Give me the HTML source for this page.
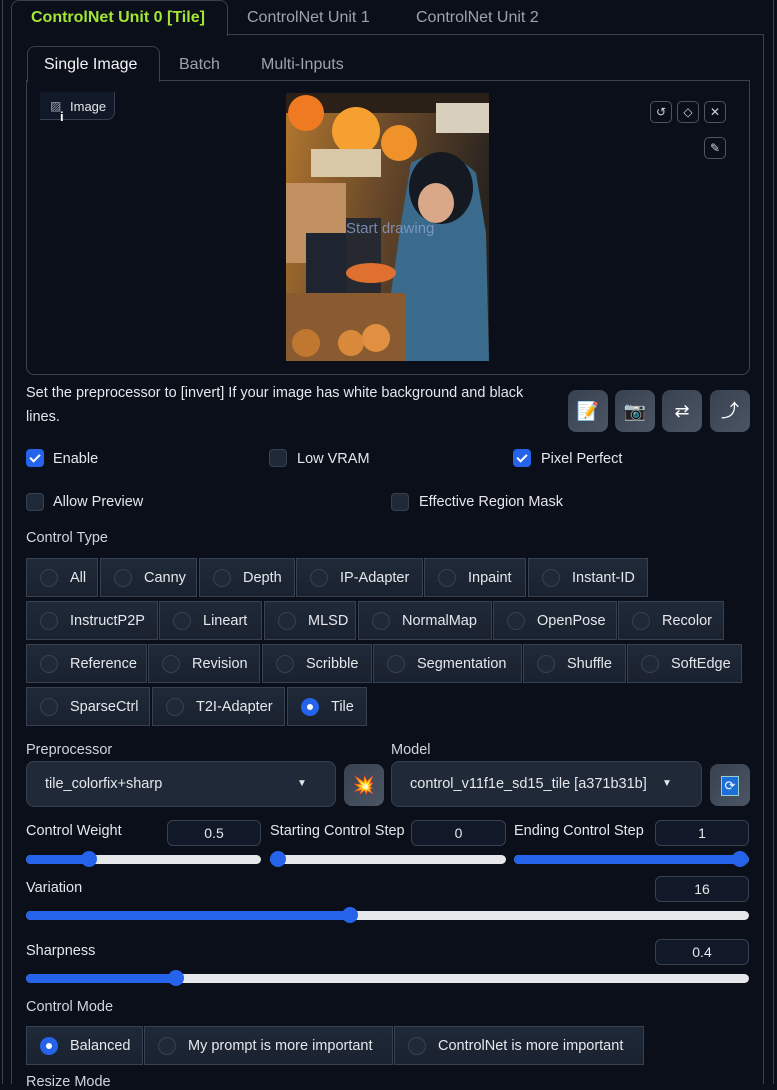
<!DOCTYPE html>
<html><head><meta charset="utf-8"><style>
*{box-sizing:border-box;margin:0;padding:0}
body{width:777px;height:1084px;background:#0b0f19;overflow:hidden;position:relative;font-family:"Liberation Sans",sans-serif;color:#e5e7eb;font-size:14px}
.a{position:absolute}
.ln{position:absolute;background:#374151}
.t{position:absolute;white-space:nowrap;margin-top:1px}
.rb{position:absolute;height:39px;background:linear-gradient(#1f2937,#1a2230);border:1px solid #374151;display:flex;align-items:center;padding-left:13px;font-size:14.5px;color:#e5e7eb}
.rb i{display:inline-block;width:18px;height:18px;border-radius:50%;border:1px solid #374151;background:#1f2937;margin-right:12px;flex:none}
.rb i.on{background:#2563eb;border-color:#2563eb;position:relative}
.rb i.on:after{content:"";position:absolute;left:5px;top:5px;width:6px;height:6px;border-radius:50%;background:#fff}
.cb{position:absolute;width:18px;height:18px;border-radius:4px;background:#1f2937;border:1px solid #374151}
.cb.on{background:#2563eb;border-color:#2563eb}
.cb.on:after{content:"";position:absolute;left:5px;top:2px;width:4px;height:8px;border:solid #fff;border-width:0 2px 2px 0;transform:rotate(45deg)}
.num{position:absolute;height:26px;background:#111827;border:1px solid #374151;border-radius:6px;text-align:center;line-height:24px;font-size:14px}
.tr{position:absolute;height:9px;background:#e5e7eb;border-radius:5px;overflow:hidden}
.tr b{position:absolute;left:0;top:0;bottom:0;background:#2563eb}
.th{position:absolute;width:16px;height:16px;border-radius:50%;background:#2563eb}
.ib{position:absolute;width:22px;height:22px;border:1px solid #4b5563;border-radius:5px;color:#d1d5db;font-size:12px;text-align:center;line-height:20px}
.gb{position:absolute;width:40px;height:42px;border-radius:8px;background:linear-gradient(135deg,#374151,#4b5563);text-align:center;line-height:42px;font-size:18px}
.dd{position:absolute;height:46px;background:#1f2937;border:1px solid #374151;border-radius:8px;line-height:44px;padding-left:18px;font-size:14.5px}
</style></head><body>
<div class="ln" style="left:2px;top:0;width:1px;height:1084px"></div>
<div class="ln" style="left:773px;top:0;width:1px;height:1084px"></div>
<div class="ln" style="left:11px;top:10px;width:1px;height:1074px"></div>
<div class="ln" style="left:763px;top:34px;width:1px;height:1050px"></div>
<div class="a" style="left:11px;top:0;width:217px;height:36px;border:1px solid #374151;border-bottom:none;border-radius:8px 8px 0 0;background:#0b0f19"></div>
<div class="ln" style="left:227px;top:34px;width:537px;height:1px"></div>
<div class="t" style="left:31px;top:8px;font-size:16px;font-weight:bold;color:#a3e635">ControlNet Unit 0 [Tile]</div>
<div class="t" style="left:247px;top:8px;font-size:16px;color:#9ca3af">ControlNet Unit 1</div>
<div class="t" style="left:416px;top:8px;font-size:16px;color:#9ca3af">ControlNet Unit 2</div>
<div class="a" style="left:27px;top:46px;width:133px;height:36px;border:1px solid #374151;border-bottom:none;border-radius:8px 8px 0 0;background:#0b0f19;z-index:2"></div>
<div class="t" style="left:44px;top:55px;font-size:16px;color:#f3f4f6;z-index:3">Single Image</div>
<div class="t" style="left:179px;top:55px;font-size:16px;color:#9ca3af">Batch</div>
<div class="t" style="left:261px;top:55px;font-size:16px;color:#9ca3af">Multi-Inputs</div>
<div class="a" style="left:26px;top:80px;width:724px;height:295px;border:1px solid #374151;border-radius:0 0 8px 8px"></div>
<div class="a" style="left:40px;top:92px;width:75px;height:28px;border:1px solid #374151;border-top:none;border-left:none;border-radius:0 0 8px 0;background:#111827"></div>
<div class="t" style="left:50px;top:98px;font-size:12px;color:#9ca3af">▨</div>
<div class="t" style="left:70px;top:98px;font-size:13px;color:#e5e7eb">Image</div>
<div class="t" style="left:60px;top:108px;font-size:13px;font-weight:bold;color:#fff">i</div>
<svg class="a" style="left:286px;top:93px" width="203" height="268" viewBox="0 0 203 268">
<defs><linearGradient id="bg" x1="0" y1="0" x2="1" y2="0.3"><stop offset="0" stop-color="#b4782e"/><stop offset="0.5" stop-color="#6b4a2a"/><stop offset="1" stop-color="#2a2420"/></linearGradient></defs>
<rect width="203" height="268" fill="url(#bg)"/>
<rect x="0" y="0" width="203" height="20" fill="#2b2018"/>
<circle cx="20" cy="20" r="18" fill="#f07a22"/><circle cx="70" cy="38" r="24" fill="#f5a030"/><circle cx="113" cy="50" r="18" fill="#f0922a"/>
<rect x="25" y="56" width="70" height="28" fill="#d8c8a8"/>
<rect x="150" y="10" width="53" height="30" fill="#d8cfbc"/>
<rect x="0" y="90" width="60" height="80" fill="#c09060"/>
<rect x="20" y="140" width="40" height="80" fill="#1e2430"/><rect x="60" y="125" width="35" height="90" fill="#262a30"/>
<path d="M125 70 Q160 50 190 80 L200 140 L203 268 L110 268 L105 200 L115 130 Z" fill="#3a6a8c"/>
<ellipse cx="155" cy="95" rx="32" ry="36" fill="#151a22"/>
<ellipse cx="150" cy="110" rx="18" ry="20" fill="#d9a888"/>
<rect x="0" y="200" width="120" height="68" fill="#8a5a30"/>
<circle cx="90" cy="245" r="14" fill="#e09040"/><circle cx="65" cy="250" r="13" fill="#d88a3a"/><circle cx="20" cy="250" r="14" fill="#c07830"/>
<ellipse cx="85" cy="180" rx="25" ry="10" fill="#e07030"/>
</svg>
<div class="t" style="left:346px;top:219px;font-size:15px;color:#8aa0c8;opacity:.8">Start drawing</div>
<div class="ib" style="left:650px;top:101px">↺</div>
<div class="ib" style="left:677px;top:101px">◇</div>
<div class="ib" style="left:704px;top:101px">✕</div>
<div class="ib" style="left:704px;top:137px">✎</div>
<div class="t" style="left:26px;top:380px;font-size:14.5px;line-height:24px;color:#e5e7eb">Set the preprocessor to [invert] If your image has white background and black<br>lines.</div>
<div class="gb" style="left:568px;top:390px">📝</div>
<div class="gb" style="left:615px;top:390px">📷</div>
<div class="gb" style="left:662px;top:390px;color:#fff">⇄</div>
<div class="gb" style="left:710px;top:390px;color:#fff">⤴</div>
<div class="cb on" style="left:26px;top:449px"></div><div class="t" style="left:53px;top:450px;font-size:14.5px">Enable</div>
<div class="cb" style="left:269px;top:449px"></div><div class="t" style="left:297px;top:450px;font-size:14.5px">Low VRAM</div>
<div class="cb on" style="left:513px;top:449px"></div><div class="t" style="left:541px;top:450px;font-size:14.5px">Pixel Perfect</div>
<div class="cb" style="left:26px;top:493px"></div><div class="t" style="left:53px;top:493px;font-size:14.5px">Allow Preview</div>
<div class="cb" style="left:391px;top:493px"></div><div class="t" style="left:419px;top:493px;font-size:14.5px">Effective Region Mask</div>
<div class="t" style="left:26px;top:529px;font-size:14.5px;color:#d1d5db">Control Type</div>
<div class="rb" style="left:26px;top:558px;width:72px"><i></i>All</div>
<div class="rb" style="left:100px;top:558px;width:97px"><i></i>Canny</div>
<div class="rb" style="left:199px;top:558px;width:96px"><i></i>Depth</div>
<div class="rb" style="left:296px;top:558px;width:127px"><i></i>IP-Adapter</div>
<div class="rb" style="left:424px;top:558px;width:102px"><i></i>Inpaint</div>
<div class="rb" style="left:528px;top:558px;width:120px"><i></i>Instant-ID</div>
<div class="rb" style="left:26px;top:601px;width:132px"><i></i>InstructP2P</div>
<div class="rb" style="left:159px;top:601px;width:103px"><i></i>Lineart</div>
<div class="rb" style="left:264px;top:601px;width:92px"><i></i>MLSD</div>
<div class="rb" style="left:358px;top:601px;width:134px"><i></i>NormalMap</div>
<div class="rb" style="left:493px;top:601px;width:124px"><i></i>OpenPose</div>
<div class="rb" style="left:618px;top:601px;width:106px"><i></i>Recolor</div>
<div class="rb" style="left:26px;top:644px;width:121px"><i></i>Reference</div>
<div class="rb" style="left:148px;top:644px;width:112px"><i></i>Revision</div>
<div class="rb" style="left:262px;top:644px;width:110px"><i></i>Scribble</div>
<div class="rb" style="left:373px;top:644px;width:149px"><i></i>Segmentation</div>
<div class="rb" style="left:523px;top:644px;width:103px"><i></i>Shuffle</div>
<div class="rb" style="left:627px;top:644px;width:115px"><i></i>SoftEdge</div>
<div class="rb" style="left:26px;top:687px;width:124px"><i></i>SparseCtrl</div>
<div class="rb" style="left:152px;top:687px;width:133px"><i></i>T2I-Adapter</div>
<div class="rb" style="left:287px;top:687px;width:80px"><i class="on"></i>Tile</div>
<div class="t" style="left:26px;top:741px;font-size:14.5px;color:#d1d5db">Preprocessor</div>
<div class="t" style="left:391px;top:741px;font-size:14.5px;color:#d1d5db">Model</div>
<div class="dd" style="left:26px;top:761px;width:310px">tile_colorfix+sharp<span style="position:absolute;left:270px;font-size:10px">▼</span></div>
<div class="gb" style="left:344px;top:764px;width:40px">💥</div>
<div class="dd" style="left:391px;top:761px;width:311px">control_v11f1e_sd15_tile [a371b31b]<span style="position:absolute;left:270px;font-size:10px">▼</span></div>
<div class="gb" style="left:710px;top:764px;width:40px"><span style="display:inline-block;width:18px;height:20px;background:#1d6fd8;border:1px solid #9cc;color:#fff;font-size:13px;line-height:18px;vertical-align:middle">⟳</span></div>
<div class="t" style="left:26px;top:822px;font-size:14.5px">Control Weight</div>
<div class="num" style="left:167px;top:820px;width:94px">0.5</div>
<div class="t" style="left:270px;top:822px;font-size:14.5px">Starting Control Step</div>
<div class="num" style="left:411px;top:820px;width:95px">0</div>
<div class="t" style="left:514px;top:822px;font-size:14.5px">Ending Control Step</div>
<div class="num" style="left:655px;top:820px;width:94px">1</div>
<div class="tr" style="left:26px;top:855px;width:235px"><b style="width:63px"></b></div><div class="th" style="left:81px;top:851px"></div>
<div class="tr" style="left:270px;top:855px;width:236px"><b style="width:8px"></b></div><div class="th" style="left:270px;top:851px"></div>
<div class="tr" style="left:514px;top:855px;width:235px"><b style="width:235px"></b></div><div class="th" style="left:732px;top:851px"></div>
<div class="t" style="left:26px;top:879px;font-size:14.5px">Variation</div>
<div class="num" style="left:655px;top:876px;width:94px">16</div>
<div class="tr" style="left:26px;top:911px;width:723px"><b style="width:324px"></b></div><div class="th" style="left:342px;top:907px"></div>
<div class="t" style="left:26px;top:942px;font-size:14.5px">Sharpness</div>
<div class="num" style="left:655px;top:939px;width:94px">0.4</div>
<div class="tr" style="left:26px;top:974px;width:723px"><b style="width:150px"></b></div><div class="th" style="left:168px;top:970px"></div>
<div class="t" style="left:26px;top:998px;font-size:14.5px;color:#d1d5db">Control Mode</div>
<div class="rb" style="left:26px;top:1026px;width:117px"><i class="on"></i>Balanced</div>
<div class="rb" style="left:144px;top:1026px;width:249px"><i></i>My prompt is more important</div>
<div class="rb" style="left:394px;top:1026px;width:250px"><i></i>ControlNet is more important</div>
<div class="t" style="left:26px;top:1073px;font-size:14.5px;color:#d1d5db">Resize Mode</div>
</body></html>
